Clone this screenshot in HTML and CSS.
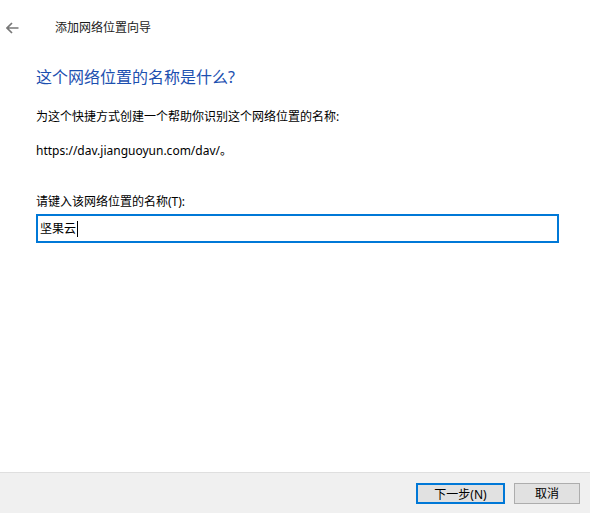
FILE: index.html
```html
<!DOCTYPE html>
<html lang="zh-CN">
<head>
    <meta charset="UTF-8">
    <title>添加网络位置向导</title>
    <link rel="stylesheet" href="styles.css">
</head>
<body>
    <div class="header">
        <span class="back">
            <svg width="13" height="12" viewBox="0 0 13 12">
                <path d="M6 1 L1 6 L6 11 M1 6 H12.5" fill="none" stroke="#777777" stroke-width="1.7"/>
            </svg>
        </span>
        <span class="title">添加网络位置向导</span>
    </div>

    <div class="content">
        <h1>这个网络位置的名称是什么?</h1>
        <p class="hint">为这个快捷方式创建一个帮助你识别这个网络位置的名称:</p>
        <p class="url">https://dav.jianguoyun.com/dav/。</p>

        <label class="name-label">请键入该网络位置的名称(T):</label>
        <div class="textbox">坚果云<span class="caret"></span></div>
    </div>

    <div class="footer">
        <button class="next">下一步(N)</button>
        <button class="cancel">取消</button>
    </div>
</body>
</html>
```

FILE: styles.css
```css
html, body {
    margin: 0;
    padding: 0;
}
body {
    width: 590px;
    height: 513px;
    background-color: #ffffff;
    color: #000000;
    font-family: "Noto Sans", "Noto Sans CJK SC", sans-serif;
    font-size: 12px;
    display: flex;
    flex-direction: column;
    overflow: hidden;
}
.header {
    height: 56px;
    padding-left: 6px;
    display: flex;
    align-items: center;
}
.back {
    width: 13px;
    height: 12px;
    display: flex;
}
.title {
    margin-left: 36px;
    color: #1a1a1a;
    line-height: 16px;
}
.content {
    padding-left: 36px;
    padding-top: 10px;
    display: flex;
    flex-direction: column;
    align-items: flex-start;
}
h1 {
    margin: 0;
    font-size: 16px;
    font-weight: normal;
    line-height: 22px;
    color: #1c50b0;
}
.hint {
    margin: 20px 0 0;
    line-height: 18px;
}
.url {
    margin: 16px 0 0;
    line-height: 18px;
}
.name-label {
    margin-top: 33px;
    line-height: 18px;
}
.textbox {
    margin-top: 3px;
    box-sizing: border-box;
    width: 523px;
    height: 29px;
    border: 2px solid #0078d7;
    padding: 0 0 0 2px;
    line-height: 25px;
    display: flex;
    align-items: center;
}
.caret {
    width: 1px;
    height: 16px;
    margin-left: 1px;
    background-color: #000000;
}
.footer {
    margin-top: auto;
    height: 40px;
    border-top: 1px solid #dfdfdf;
    background-color: #f0f0f0;
    display: flex;
    justify-content: flex-end;
    align-items: center;
    gap: 9px;
    padding-right: 10px;
}
button {
    box-sizing: border-box;
    height: 21px;
    padding: 0;
    font-family: "Noto Sans", "Noto Sans CJK SC", sans-serif;
    font-size: 12px;
    color: #000000;
    background-color: #e1e1e1;
}
button.next {
    width: 89px;
    border: 2px solid #0078d7;
}
button.cancel {
    width: 66px;
    border: 1px solid #adadad;
}
```
